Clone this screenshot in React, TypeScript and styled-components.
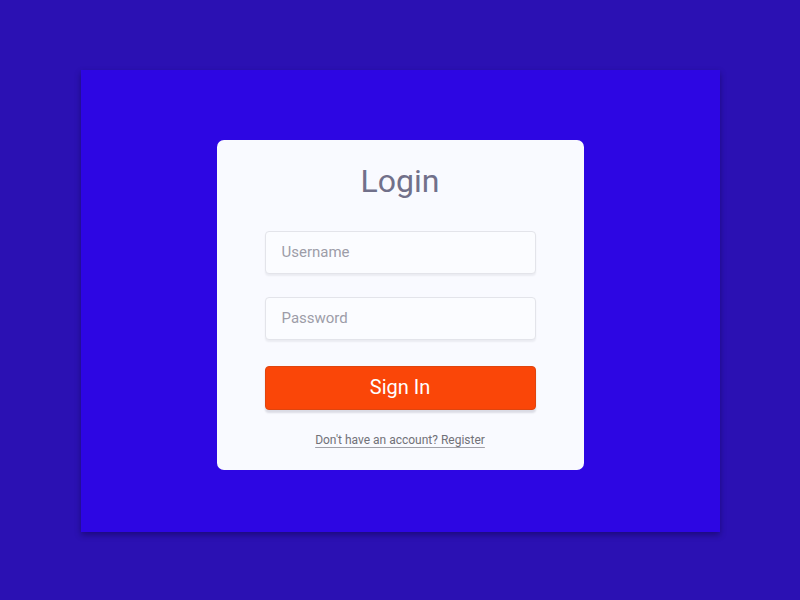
import React from 'react';
import styled, { createGlobalStyle } from 'styled-components';

const GlobalStyle = createGlobalStyle`
    html, body {
        margin: 0;
        padding: 0;
        background: #2b11b3;
        font-family: Roboto, "Noto Sans", "Liberation Sans", sans-serif;
    }
`;

const Page = styled.div`
    width: 800px;
    height: 600px;
    display: flex;
    justify-content: center;
    align-items: center;
    padding-top: 2px;
    box-sizing: border-box;
`;

const Panel = styled.div`
    width: 639px;
    height: 462px;
    background: #2d06e3;
    box-shadow: 0 3px 6px rgba(10, 0, 60, 0.45);
    display: flex;
    justify-content: center;
    align-items: center;
    padding-top: 8px;
    box-sizing: border-box;
`;

const Card = styled.form`
    width: 367px;
    height: 330px;
    background: #f9faff;
    border-radius: 7px;
    box-sizing: border-box;
    padding: 21px 48px 0;
    display: flex;
    flex-direction: column;
    align-items: stretch;
`;

const Title = styled.h1`
    margin: 0 0 30px;
    font-size: 32px;
    font-weight: 400;
    line-height: 40px;
    color: #71708a;
    text-align: center;
`;

const Field = styled.input`
    height: 43px;
    width: 100%;
    box-sizing: border-box;
    border: 1px solid #e3e4ea;
    border-radius: 4px;
    background: #fbfcff;
    box-shadow: 0 2px 2px rgba(0, 0, 30, 0.06);
    padding: 0 16px 2px;
    font-family: inherit;
    font-size: 15px;
    color: #555;
    margin-bottom: 23px;
    outline: none;

    &::placeholder {
        color: #9d9ca8;
    }
`;

const SubmitButton = styled.button`
    height: 44px;
    width: 100%;
    margin-top: 3px;
    border: 1px solid #e0450e;
    border-radius: 4px;
    background: #fa4608;
    color: #ffffff;
    font-family: inherit;
    font-size: 20px;
    padding-bottom: 3px;
    box-shadow: 0 3px 2px rgba(0, 0, 40, 0.12);
    cursor: pointer;
`;

const RegisterLink = styled.a`
    align-self: center;
    margin-top: 23px;
    font-size: 12px;
    color: #717178;
    text-decoration: underline;
    text-decoration-color: #a0a0a8;
    text-underline-offset: 3px;
    cursor: pointer;
`;

const App: React.FC = () => {
    return (
        <>
            <GlobalStyle />
            <Page>
                <Panel>
                    <Card onSubmit={(e) => e.preventDefault()}>
                        <Title>Login</Title>
                        <Field type="text" placeholder="Username" />
                        <Field type="password" placeholder="Password" />
                        <SubmitButton type="submit">Sign In</SubmitButton>
                        <RegisterLink>Don't have an account? Register</RegisterLink>
                    </Card>
                </Panel>
            </Page>
        </>
    );
};

export default App;
